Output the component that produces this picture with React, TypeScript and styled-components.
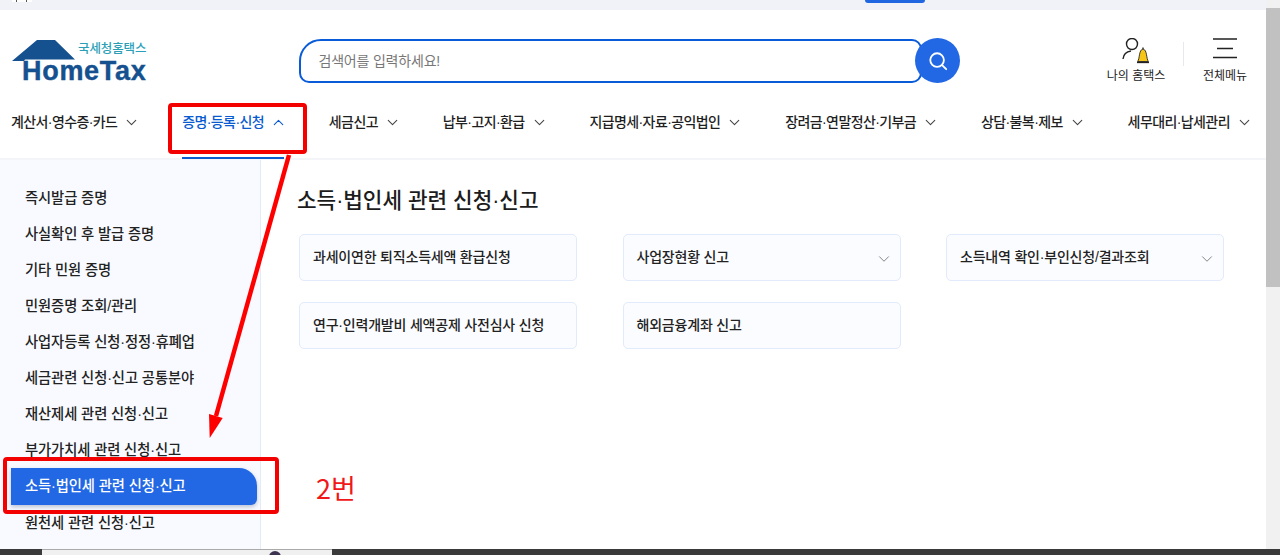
import React from "react";
import styled, { createGlobalStyle } from "styled-components";
import { ChevronDown, ChevronUp } from "lucide-react";

const GlobalStyle = createGlobalStyle`
  html, body {
    margin: 0;
    padding: 0;
    height: 555px;
    overflow: hidden;
    background: #fff;
    font-family: "Liberation Sans", "Noto Sans CJK KR", sans-serif;
    color: #1c1c1c;
  }
  * { box-sizing: border-box; }
`;

const Shell = styled.div`
  position: relative;
  display: flex;
  width: 1280px;
  height: 555px;
  overflow: hidden;
`;
const Page = styled.div`
  display: flex;
  flex-direction: column;
  width: 1266px;
  height: 555px;
`;
const ScrollTrack = styled.div`
  width: 14px;
  height: 549px;
  background: #f1f1f1;
`;
const ScrollThumb = styled.div`
  height: 279px;
  margin-top: 8px;
  background: #c1c1c1;
`;
const TopStrip = styled.div`
  display: flex;
  justify-content: space-between;
  height: 10px;
  padding: 0 341px 0 12px;
  background: #f0f2f7;
`;
const StripChip = styled.div`
  width: 20px;
  height: 2px;
  background: linear-gradient(90deg, #fff 4px, #555 4px, #555 5px, #fff 5px, #fff 14px, #555 14px, #555 15px, #fff 15px);
`;
const StripButton = styled.div`
  width: 60px;
  height: 3px;
  border-radius: 0 0 3px 3px;
  background: #1f66e0;
`;
const Header = styled.div`
  display: flex;
  align-items: flex-start;
  height: 72px;
  padding: 28px 0 0 11px;
`;
const Logo = styled.div`
  position: relative;
  width: 136px;
  height: 44px;
  margin-top: 2px;
  flex: none;
`;
const LogoHouse = styled.svg`
  position: absolute;
  left: 0;
  top: 0;
`;
const LogoSub = styled.span`
  position: absolute;
  left: 67px;
  top: 2px;
  font-size: 12.5px;
  line-height: 14px;
  font-weight: 500;
  letter-spacing: -0.1px;
  color: #2b9fb8;
  white-space: nowrap;
`;
const LogoMain = styled.span`
  position: absolute;
  left: 11px;
  top: 16px;
  font-size: 27px;
  line-height: 30px;
  font-weight: 700;
  letter-spacing: 0.7px;
  color: #15508f;
  -webkit-text-stroke: 0.4px #15508f;
`;
const SearchWrap = styled.div`
  display: flex;
  align-items: center;
  margin-left: 152px;
  flex: none;
`;
const SearchBox = styled.div`
  display: flex;
  align-items: center;
  width: 623px;
  height: 44px;
  padding: 0 0 2px 17.5px;
  border: 2.5px solid #0a5bd8;
  border-radius: 22px 10px 10px 10px;
  font-size: 14px;
  letter-spacing: -0.2px;
  color: #777;
  background: #fff;
`;
const SearchButton = styled.div`
  display: flex;
  align-items: center;
  justify-content: center;
  width: 45px;
  height: 45px;
  margin-left: -7px;
  border-radius: 50%;
  background: #2268e4;
  flex: none;
`;
const HeaderLinks = styled.div`
  display: flex;
  align-items: flex-start;
  margin-left: 144px;
`;
const HeaderLink = styled.div<{ $width: number }>`
  display: flex;
  flex-direction: column;
  align-items: center;
  width: ${(p) => p.$width}px;
  font-size: 12px;
  line-height: 14px;
  color: #222;
  white-space: nowrap;
`;
const LinkIcon = styled.svg`
  display: block;
  margin-bottom: 3px;
`;
const LinkDivider = styled.div`
  width: 1px;
  height: 24px;
  margin: 4px 19px 0 15px;
  background: #e6e8ec;
`;
const Nav = styled.div`
  display: flex;
  justify-content: space-between;
  align-items: flex-start;
  height: 78px;
  padding: 0 13px 0 11px;
  border-bottom: 2px solid #f3f5f9;
`;
const NavItem = styled.div<{ $active?: boolean }>`
  position: relative;
  display: flex;
  align-items: flex-start;
  gap: 6px;
  height: 78px;
  padding-top: 30px;
  font-size: 14px;
  line-height: 20px;
  font-weight: 500;
  letter-spacing: -0.6px;
  white-space: nowrap;
  color: ${(p) => (p.$active ? "#0a5bd0" : "#1f1f1f")};
  svg {
    margin-top: 2px;
    color: ${(p) => (p.$active ? "#0a5bd0" : "#444")};
  }
  ${(p) =>
    p.$active &&
    `&::after {
      content: "";
      position: absolute;
      left: 0;
      right: 3px;
      bottom: 1px;
      height: 2px;
      background: #0a5bd0;
    }`}
`;
const Body = styled.div`
  display: flex;
  height: 389px;
`;
const Sidebar = styled.div`
  width: 261px;
  padding: 20px 3px 0 11px;
  background: #f8faff;
  border-right: 1px solid #e3ebfa;
  flex: none;
  overflow: hidden;
`;
const SideItem = styled.div<{ $active?: boolean }>`
  display: flex;
  align-items: center;
  height: ${(p) => (p.$active ? "37px" : "36px")};
  padding: 0 0 4px 14px;
  font-size: 14.3px;
  font-weight: 500;
  letter-spacing: -0.1px;
  white-space: nowrap;
  color: ${(p) => (p.$active ? "#fff" : "#222")};
  background: ${(p) => (p.$active ? "#2268e4" : "transparent")};
  border-radius: ${(p) => (p.$active ? "0 18px 6px 0" : "0")};
  box-shadow: ${(p) => (p.$active ? "0 2px 4px rgba(40, 60, 110, 0.3)" : "none")};
`;
const Content = styled.div`
  flex: 1;
  padding: 26px 0 0 36px;
`;
const Title = styled.h2`
  margin: 0 0 18px;
  font-size: 21.3px;
  line-height: 30px;
  font-weight: 500;
  color: #1c1c1c;
  white-space: nowrap;
`;
const CardGrid = styled.div`
  display: grid;
  grid-template-columns: repeat(3, 278px);
  grid-auto-rows: 47px;
  column-gap: 45.5px;
  row-gap: 21px;
  margin-left: 2px;
`;
const Card = styled.div`
  display: flex;
  align-items: center;
  justify-content: space-between;
  padding: 0 7px 3px 13px;
  border: 1px solid #e2ebfb;
  border-radius: 5px;
  background: #fbfcff;
  font-size: 14px;
  font-weight: 500;
  letter-spacing: -0.2px;
  color: #222;
  white-space: nowrap;
  svg {
    margin-top: 6px;
    color: #777;
  }
`;
const BottomBar = styled.div`
  position: absolute;
  left: 0;
  bottom: 0;
  display: flex;
  width: 1280px;
  height: 6px;
  background: #3a3a3a;
`;
const BottomPaper = styled.div`
  display: flex;
  justify-content: flex-end;
  width: 290px;
  margin-left: 42px;
  padding-right: 50px;
  border-top: 1px solid #aaa;
  background: #f0f0f0;
`;
const Overlay = styled.svg`
  position: absolute;
  left: 0;
  top: 0;
  pointer-events: none;
`;
const Note = styled.span`
  position: absolute;
  left: 316px;
  top: 470px;
  font-family: "Noto Sans CJK KR", sans-serif;
  font-size: 27px;
  line-height: 36px;
  font-weight: 400;
  color: #f01818;
`;

const navItems = [
  "계산서·영수증·카드",
  "증명·등록·신청",
  "세금신고",
  "납부·고지·환급",
  "지급명세·자료·공익법인",
  "장려금·연말정산·기부금",
  "상담·불복·제보",
  "세무대리·납세관리",
];

const sideItems = [
  "즉시발급 증명",
  "사실확인 후 발급 증명",
  "기타 민원 증명",
  "민원증명 조회/관리",
  "사업자등록 신청·정정·휴폐업",
  "세금관련 신청·신고 공통분야",
  "재산제세 관련 신청·신고",
  "부가가치세 관련 신청·신고",
  "소득·법인세 관련 신청·신고",
  "원천세 관련 신청·신고",
];

const cards = [
  { label: "과세이연한 퇴직소득세액 환급신청", more: false },
  { label: "사업장현황 신고", more: true },
  { label: "소득내역 확인·부인신청/결과조회", more: true },
  { label: "연구·인력개발비 세액공제 사전심사 신청", more: false },
  { label: "해외금융계좌 신고", more: false },
];

export default function App() {
  return (
    <Shell>
      <GlobalStyle />
      <Page>
        <TopStrip>
          <StripChip />
          <StripButton />
        </TopStrip>
        <Header>
          <Logo>
            <LogoHouse width="80" height="44" viewBox="0 0 80 44">
              <path d="M1 21 L26 0 H44 L64 19.5 H14 L13 21 Z" fill="#15508f" />
            </LogoHouse>
            <LogoSub>국세청홈택스</LogoSub>
            <LogoMain>HomeTax</LogoMain>
          </Logo>
          <SearchWrap>
            <SearchBox>검색어를 입력하세요!</SearchBox>
            <SearchButton>
              <svg width="20" height="20" viewBox="0 0 22 22" fill="none" stroke="#fff" strokeWidth="2">
                <circle cx="10" cy="10" r="7.5" />
                <path d="M15.5 15.5 L20 20" strokeLinecap="round" />
              </svg>
            </SearchButton>
          </SearchWrap>
          <HeaderLinks>
            <HeaderLink $width={64}>
              <LinkIcon width="32" height="28" viewBox="0 0 32 28" fill="none">
                <circle cx="12" cy="6" r="5.5" stroke="#222" strokeWidth="1.4" />
                <path d="M3 21 C3.5 16 7 13.5 11 13" stroke="#222" strokeWidth="1.4" />
                <path d="M17.5 23.5 C20 21 18.5 12 23 11 C27.5 12 26 21 28.5 23.5 Z" fill="#f5c518" stroke="#222" strokeWidth="0.9" />
                <path d="M17 24.5 H29" stroke="#222" strokeWidth="1.3" />
                <path d="M23 9.5 V11" stroke="#222" strokeWidth="1.3" />
              </LinkIcon>
              나의 홈택스
            </HeaderLink>
            <LinkDivider />
            <HeaderLink $width={44}>
              <LinkIcon width="26" height="28" viewBox="0 0 26 28" fill="none" stroke="#222" strokeWidth="1.3">
                <path d="M1 1 H25 M5 10.5 H21 M1 19.5 H25" />
              </LinkIcon>
              전체메뉴
            </HeaderLink>
          </HeaderLinks>
        </Header>
        <Nav>
          {navItems.map((n, i) => (
            <NavItem key={n} $active={i === 1}>
              {n}
              {i === 1 ? <ChevronUp size={17} strokeWidth={1.5} /> : <ChevronDown size={17} strokeWidth={1.5} />}
            </NavItem>
          ))}
        </Nav>
        <Body>
          <Sidebar>
            {sideItems.map((s, i) => (
              <SideItem key={s} $active={i === 8}>
                {s}
              </SideItem>
            ))}
          </Sidebar>
          <Content>
            <Title>소득·법인세 관련 신청·신고</Title>
            <CardGrid>
              {cards.map((c) => (
                <Card key={c.label}>
                  {c.label}
                  {c.more && <ChevronDown size={18} strokeWidth={1.2} />}
                </Card>
              ))}
            </CardGrid>
          </Content>
        </Body>
      </Page>
      <ScrollTrack>
        <ScrollThumb />
      </ScrollTrack>
      <BottomBar>
        <BottomPaper>
          <svg width="14" height="6" viewBox="0 0 14 6">
            <circle cx="7" cy="7" r="6" fill="#3d3350" />
          </svg>
        </BottomPaper>
      </BottomBar>
      <Overlay width="1280" height="555" viewBox="0 0 1280 555" fill="none">
        <rect x="170" y="105" width="135" height="47" rx="2" stroke="#f30000" strokeWidth="4" />
        <rect x="5" y="459" width="272" height="53" rx="2" stroke="#f30000" strokeWidth="4" />
        <path d="M289 155 L216 416" stroke="#ff0000" strokeWidth="4.5" />
        <path d="M209.7 438 L209 414 L222.7 418 Z" fill="#ff0000" />
      </Overlay>
      <Note>2번</Note>
    </Shell>
  );
}
